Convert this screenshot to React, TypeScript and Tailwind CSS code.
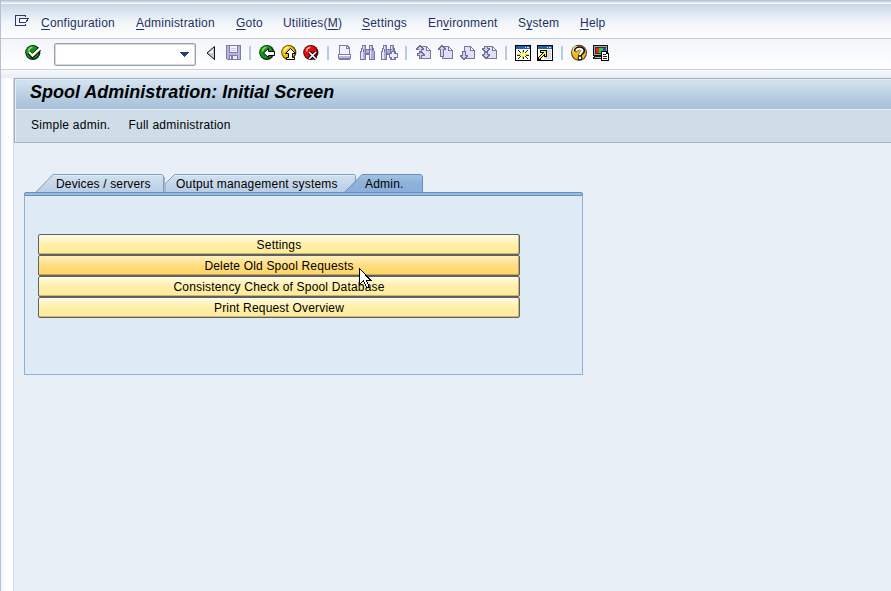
import type { ReactNode } from "react";
import clsx from "clsx";

type MenuEntry = { before?: string; key: string; after: string };

const MENU: MenuEntry[] = [
  { key: "C", after: "onfiguration" },
  { key: "A", after: "dministration" },
  { key: "G", after: "oto" },
  { before: "Utilities(", key: "M", after: ")" },
  { key: "S", after: "ettings" },
  { before: "En", key: "v", after: "ironment" },
  { before: "S", key: "y", after: "stem" },
  { key: "H", after: "elp" },
];

const ACTIONS = [
  { label: "Settings", hover: false },
  { label: "Delete Old Spool Requests", hover: true },
  { label: "Consistency Check of Spool Database", hover: false },
  { label: "Print Request Overview", hover: false },
];

function Icon({ className, crisp = true, children }: { className?: string; crisp?: boolean; children: ReactNode }) {
  return (
    <svg
      width="18"
      height="18"
      viewBox="0 0 18 18"
      fill="none"
      shapeRendering={crisp ? "crispEdges" : "auto"}
      className={clsx("flex-shrink-0", className)}
    >
      {children}
    </svg>
  );
}

function Separator({ className }: { className: string }) {
  return <div className={clsx("h-[14px] w-[2px] flex-shrink-0 bg-[#b4cde3]", className)} />;
}

function Ball({ fill, dark, light }: { fill: string; dark: string; light: string }) {
  return (
    <>
      <circle cx="8.8" cy="8.5" r="7.6" fill={dark} />
      <circle cx="8.5" cy="8.2" r="6.4" fill={fill} />
      <path d="M4.5 7.5C4.500 5 6 3.500 8.500 3.300" stroke={light} strokeWidth="1.8" />
    </>
  );
}

function OkIcon() {
  return (
    <Icon crisp={false}>
      <Ball fill="#159514" dark="#052b0a" light="#7fdc5f" />
      <path d="M5 8.5L8.500 12L15.500 5" stroke="#000" strokeWidth="4" />
      <path d="M5 8L8.500 11.500L16 4.500" stroke="#fff" strokeWidth="2.4" />
    </Icon>
  );
}

function BackIcon() {
  return (
    <Icon className="ml-[7px]" crisp={false}>
      <Ball fill="#159514" dark="#052b0a" light="#75d957" />
      <path d="M5.5 9L10.500 4.500V7.500H16.500V11.500H10.500V13.500Z" fill="#fff" stroke="#000" />
    </Icon>
  );
}

function ExitIcon() {
  return (
    <Icon className="ml-1" crisp={false}>
      <Ball fill="#f4c300" dark="#5a3b00" light="#fff79a" />
      <path d="M10.5 4.500L15.500 9.500H12.500V13.500H14.500V15.500H6.500V13.500H8.500V9.500H5.500Z" fill="#fff" stroke="#000" />
    </Icon>
  );
}

function CancelIcon() {
  return (
    <Icon className="ml-1" crisp={false}>
      <Ball fill="#e30b12" dark="#4c0003" light="#ff9a92" />
      <path d="M7 8L14 15M14 8L7 15" stroke="#000" strokeWidth="3.4" />
      <path d="M7 8L14 15M14 8L7 15" stroke="#fff" strokeWidth="1.7" />
    </Icon>
  );
}

function SaveIcon() {
  return (
    <Icon className="ml-[3px]">
      <path d="M1 1H16V16H2L1 15Z" fill="#7c7caa" />
      <path d="M2 2H4V15H2ZM13 2H15V15H13ZM4 9H13V11H4Z" fill="#b4b4de" />
      <path d="M5 2H12V8H5Z" fill="#f4f4ff" />
      <path d="M6 4H11V5H6ZM6 6H11V7H6Z" fill="#c7c7e5" />
      <path d="M5 12H12V15H5Z" fill="#e8e8fc" />
      <path d="M6 12H8V15H6Z" fill="#8080ae" />
    </Icon>
  );
}

function PrintIcon() {
  return (
    <Icon className="ml-[7px]">
      <path d="M3 1H11L14 4V10H15V15H14V16H3V15H2V10H3Z" fill="#7c7caa" />
      <path d="M4 2H10V5H13V10H4Z" fill="#f2f2ff" />
      <path d="M11 3V4H12Z" fill="#fff" />
      <path d="M3 11H14V12H3Z" fill="#fff" />
      <path d="M3 12H14V14H3Z" fill="#b8b8e0" />
    </Icon>
  );
}

function FindIcon({ more = false, className }: { more?: boolean; className: string }) {
  return (
    <Icon className={className}>
      <path d="M3 1H7V5H10V1H14V4H15V7H16V16H10V11H7V16H1V7H2V4H3Z" fill="#7777a5" />
      <path d="M4 2H5V5H4ZM3 5H4V8H3ZM2 8H4V15H2ZM11 2H12V5H11ZM11 6H12V15H11Z" fill="#e4e4fa" />
      <path d="M5 2H6V8H5ZM4 8H6V15H4ZM12 2H13V7H12ZM12 7H15V15H12ZM7 6H10V9H7Z" fill="#adadd8" />
      {more && (
        <>
          <path d="M11 7H15V9H18V14H15V16H11V14H9V9H11Z" fill="#7777a5" />
          <path d="M12 8H14V10H17V13H14V15H12V13H10V10H12Z" fill="#ececff" />
        </>
      )}
    </Icon>
  );
}

type PageKind = "first" | "previous" | "next" | "last";

// page sheet with one or two paging arrows on its left side
function PageIcon({ kind, className }: { kind: PageKind; className: string }) {
  return (
    <Icon className={className}>
      <path d="M5 2H12V3H13V4H14V5H15V6H16V15H5Z" fill="#77779f" />
      <path d="M6 3H11V7H15V14H6Z" fill="#dfdffa" />
      <path d="M12 4H13V5H14V6H12Z" fill="#fff" />
      {kind === "first" && (
        <>
          <path d="M4 1H6V2H7V3H8V4H9V6H7V8H8V9H9V10H10V12H7V15H4V12H2V9H4V6H1V4H2V3H3V2H4Z" fill="#6f6f9c" />
          <path d="M4 3H6V4H7V5H6V7H4V5H3V4H4ZM5 9H7V10H8V11H6V14H5V11H3V10H5Z" fill="#d0d0f1" />
        </>
      )}
      {kind === "previous" && (
        <>
          <path d="M4 1H6V2H7V3H8V4H9V6H7V13H3V6H1V4H2V3H3V2H4Z" fill="#6f6f9c" />
          <path d="M4 3H6V4H7V5H6V12H4V5H3V4H4Z" fill="#d0d0f1" />
        </>
      )}
      {kind === "next" && (
        <>
          <path d="M3 7H7V11H9V13H8V14H7V15H6V16H4V15H3V14H2V13H1V11H3Z" fill="#6f6f9c" />
          <path d="M4 8H6V12H7V13H6V14H4V13H3V12H4Z" fill="#d0d0f1" />
        </>
      )}
      {kind === "last" && (
        <>
          <path d="M3 2H7V4H9V6H8V7H7V10H9V12H8V13H7V14H6V15H4V14H3V13H2V12H1V10H3V7H2V6H1V4H3Z" fill="#6f6f9c" />
          <path d="M4 3H6V5H7V6H6V7H4V6H3V5H4ZM4 9H6V11H7V12H6V13H4V12H3V11H4Z" fill="#d0d0f1" />
        </>
      )}
    </Icon>
  );
}

function WindowFrame() {
  return (
    <>
      <path d="M1 1H17V17H1Z" fill="#000" />
      <path d="M2 2H16V5H2Z" fill="#1c62b0" />
      <path d="M11 3H12V4H11ZM13 3H15V4H13Z" fill="#dce9f8" />
      <path d="M2 5H16V16H2Z" fill="#fff" />
    </>
  );
}

function NewSessionIcon() {
  return (
    <Icon className="ml-[7px]">
      <WindowFrame />
      <path d="M8 6H10V9H8ZM8 12H10V15H8ZM3 10H7V11H3ZM11 10H15V11H11Z" fill="#e9dc1b" />
      <path d="M4 6H5V7H6V8H7V9H6V8H5V7H4ZM13 6H14V7H13V8H12V9H11V8H12V7H13ZM4 15V14H5V13H6V12H7V13H6V14H5V15ZM14 15V14H13V13H12V12H11V13H12V14H13V15Z" fill="#222" />
      <path d="M9 6H10V8H9ZM9 13H10V15H9ZM3 11H6V12H3ZM12 11H15V12H12Z" fill="#222" />
      <path d="M7 9H11V12H7Z" fill="#fff34d" />
      <path d="M8 10H10V11H8Z" fill="#fff" />
    </Icon>
  );
}

function ShortcutIcon() {
  return (
    <Icon className="ml-1">
      <WindowFrame />
      <path d="M10 6H15V15H8V12H10Z" fill="#d8dbe1" />
      <path d="M4 6H11V13H8V12H7V13H6V14H5V16H2V13H3V12H4V11H5V10H6V9H4Z" fill="#000" />
      <path d="M5 7H10V12H9V10H8V11H7V12H6V13H5V14H4V15H3V13H4V12H5V11H6V10H7V9H8V8H5Z" fill="#fff12e" />
    </Icon>
  );
}

function HelpIcon() {
  return (
    <Icon className="ml-[7px]" crisp={false}>
      <circle cx="9" cy="8.8" r="8" fill="#4a3c28" />
      <circle cx="9" cy="8.8" r="7" fill="#f6b91c" />
      <path d="M3.500 8.500C3.500 5 5 3.500 7 3" stroke="#fff681" strokeWidth="2.4" />
      <path d="M5.500 7.500C5.500 3 13.500 3.200 13.300 6.800C13.200 8.800 10 9 10 12" stroke="#111" strokeWidth="3.8" />
      <path d="M6.300 7C6.800 4 12.600 4.200 12.400 6.800C12.300 8.500 9.800 8.800 9.800 11.300" stroke="#fff" strokeWidth="2.1" />
      <rect x="7.700" y="11.700" width="4.400" height="4.600" rx="1.5" fill="#111" />
      <rect x="8.700" y="12.700" width="2.4" height="2.4" fill="#fff" />
    </Icon>
  );
}

function LayoutIcon() {
  return (
    <Icon className="ml-1">
      <path d="M1 1H16V12H1Z" fill="#111" />
      <path d="M2 2H15V11H2Z" fill="#a9a9ad" />
      <path d="M3 3H14V10H3Z" fill="#333" />
      <path d="M4 4H7V9H4Z" fill="#ed2027" />
      <path d="M7 4H11V9H7Z" fill="#18d52f" />
      <path d="M11 4H14V9H11Z" fill="#3044d8" />
      <path d="M2 12H12V15H1V13H2Z" fill="#222" />
      <path d="M3 13H9V14H3Z" fill="#b9b9bd" />
      <path d="M9 7H15V8H16V9H17V17H9Z" fill="#000" />
      <path d="M10 8H14V10H16V16H10Z" fill="#fff" />
      <path d="M11 10H14V11H11ZM11 12H15V13H11ZM11 14H15V15H11Z" fill="#222" />
    </Icon>
  );
}

function MenuBar() {
  return (
    <nav className="flex h-[35px] items-center bg-linear-to-b from-[#cad7e6] via-[#f1f4f9] via-50% to-white pt-[3px] pl-[13px] text-[#1c3263]">
      <svg width="17" height="14" viewBox="0 0 17 14" fill="none" stroke="#263b6c" shapeRendering="crispEdges" className="mb-[4px]">
        <path d="M11.5 3V1.500H1.500V11.500H11.500V9.500" />
        <path d="M5.500 4.500H14.500L11.500 8.500H5.500Z" fill="#fff" />
      </svg>
      <ul className="ml-[10px] grid grid-cols-[95px_100px_47px_79px_66px_90px_62px_auto]">
        {MENU.map((m) => (
          <li key={m.key + m.after}>
            {m.before}
            <span className="underline decoration-1 underline-offset-[2px] [text-decoration-skip-ink:none]">{m.key}</span>
            {m.after}
          </li>
        ))}
      </ul>
    </nav>
  );
}

function Toolbar() {
  return (
    <div className="flex h-[30px] items-center bg-linear-to-b from-[#f2f5fa] to-white pb-[2px] pl-[23px]">
      <OkIcon />
      <div className="mt-[2px] ml-3 flex h-[23px] w-[142px] flex-shrink-0 items-center justify-end rounded-[2px] border border-[#9c9fa5] bg-white pr-[6px] shadow-[inset_0_0_0_1px_#d7dade]">
        <svg width="9" height="5" viewBox="0 0 9 5" shapeRendering="crispEdges">
          <path d="M0 0H9L4.500 5Z" fill="#263e73" />
        </svg>
      </div>
      <Icon className="ml-2" crisp={false}>
        <path d="M10.500 2.500V15.500L3 9Z" fill="#c9cbd1" stroke="#111" />
        <path d="M9 5.500L5 9H9Z" fill="#fff" />
      </Icon>
      <SaveIcon />
      <Separator className="ml-[6px]" />
      <BackIcon />
      <ExitIcon />
      <CancelIcon />
      <Separator className="ml-[7px]" />
      <PrintIcon />
      <FindIcon className="ml-[5px]" />
      <FindIcon more className="ml-[3px]" />
      <Separator className="ml-[7px]" />
      <PageIcon kind="first" className="ml-2" />
      <PageIcon kind="previous" className="ml-1" />
      <PageIcon kind="next" className="ml-1" />
      <PageIcon kind="last" className="ml-1" />
      <Separator className="ml-[6px]" />
      <NewSessionIcon />
      <ShortcutIcon />
      <Separator className="ml-[7px]" />
      <HelpIcon />
      <LayoutIcon />
    </div>
  );
}

function Tabs() {
  return (
    <div className="relative ml-[11px] flex h-[18px] w-[388px] items-center pt-[2px] text-black">
      <svg width="388" height="19" viewBox="0 0 388 19" fill="none" className="absolute top-0 left-0">
        <defs>
          <linearGradient id="tab" x1="0" y1="0" x2="0" y2="1">
            <stop stopColor="#d1e1ef" />
            <stop offset="1" stopColor="#b9cee4" />
          </linearGradient>
          <linearGradient id="activeTab" x1="0" y1="0" x2="0" y2="1">
            <stop stopColor="#a3c3e4" />
            <stop offset=".45" stopColor="#8eb2db" />
            <stop offset="1" stopColor="#8bafd9" />
          </linearGradient>
        </defs>
        <path d="M130 18V10L139.500 .5H319.500L320.500 1.500V18" fill="url(#tab)" stroke="#7f9fc3" />
        <path d="M.5 18.500L18 .5H127L128.500 2V18.500" fill="url(#tab)" stroke="#7f9fc3" />
        <path d="M129.500 3V18" stroke="#a5b7c9" />
        <path d="M18 1.500H127M140 1.500H319" stroke="#e3edf6" />
        <path d="M309.500 18.500L327 .5H386L387.500 2V18.500" fill="url(#activeTab)" stroke="#678fbd" />
      </svg>
      <span className="relative ml-[21px] w-[120px] tracking-[0.15px]">Devices / servers</span>
      <span className="relative w-[189px] whitespace-nowrap">Output management systems</span>
      <span className="relative">Admin.</span>
    </div>
  );
}

function Cursor() {
  return (
    <svg width="13" height="22" viewBox="0 0 13 22" className="absolute top-[34px] left-[321px]" shapeRendering="crispEdges">
      <path d="M.5 .5V16.500L4.500 12.500L7.500 19.500H9.500V17.500L7.500 12.500H12Z" fill="#fff" stroke="#000" />
    </svg>
  );
}

export default function App() {
  return (
    <div className="flex h-[591px] w-[891px] flex-col overflow-hidden border-l border-[#b5c0d2] bg-white font-['Liberation_Sans',Arial,sans-serif] text-[12px] leading-[14px] tracking-[0.2px] text-black">
      <div className="h-[4px] flex-shrink-0 border-t-[1px] border-[#b5c2d3] bg-linear-to-b from-[#c4cfdd] to-white" />
      <MenuBar />
      <div className="-mt-px h-px flex-shrink-0 bg-[#c4ccd9]" />
      <Toolbar />
      <div className="h-px flex-shrink-0 bg-[#cbd2de]" />
      <div className="h-2 flex-shrink-0 bg-linear-to-b from-[#f6f8fb] to-[#e9edf4]" />

      <div className="flex flex-1 bg-linear-to-r from-[#f2f5f9] to-white to-[6px]">
        <main className="ml-3 flex-1 border-l border-[#d3dae4] bg-[#e8eff7]">
          <header className="border-y border-l border-[#9caec5] border-b-[#a5b5ca]">
            <div className="border-t border-l border-[#e6eff6]">
              <h1 className="h-[30px] border-b border-[#e5eef6] bg-linear-to-b from-[#d0e0ed] from-10% via-[#b5cde1] via-60% to-[#a9c1da] pt-px pl-[14px] text-[18px] leading-[23px] font-bold tracking-normal italic">
                Spool Administration: Initial Screen
              </h1>
              <div className="flex h-[32px] gap-[18px] bg-[#cfdde8] pt-2 pl-[15px] tracking-[0.26px]">
                <span>Simple admin.</span>
                <span>Full administration</span>
              </div>
            </div>
          </header>

          <section className="mt-[31px] ml-[10px] w-[559px]">
            <Tabs />
            <div className="relative h-[4px] rounded-t-[2px] border border-[#678fbd] bg-[#9bbce0]" />
            <div className="h-[179px] border border-t-0 border-[#8fb1d5] bg-[#dfebf4] pt-[38px] pl-[13px]">
              <div className="relative w-[482px]">
                {ACTIONS.map((a) => (
                  <button
                    key={a.label}
                    className={clsx(
                      "block h-[21px] w-full rounded-[2px] border border-[#5f6063] pt-px text-center leading-[18px] tracking-[0.18px]",
                      a.hover
                        ? "bg-linear-to-b from-[#fff0bd] via-[#ffdc80] via-50% to-[#ffd55f] shadow-[inset_-1px_-1px_#c9a451]"
                        : "bg-linear-to-b from-[#fffbe5] via-[#ffefa8] via-50% to-[#ffeb98] shadow-[inset_-1px_-1px_#c8b877]"
                    )}
                  >
                    {a.label}
                  </button>
                ))}
                <Cursor />
              </div>
            </div>
          </section>
        </main>
      </div>
    </div>
  );
}
